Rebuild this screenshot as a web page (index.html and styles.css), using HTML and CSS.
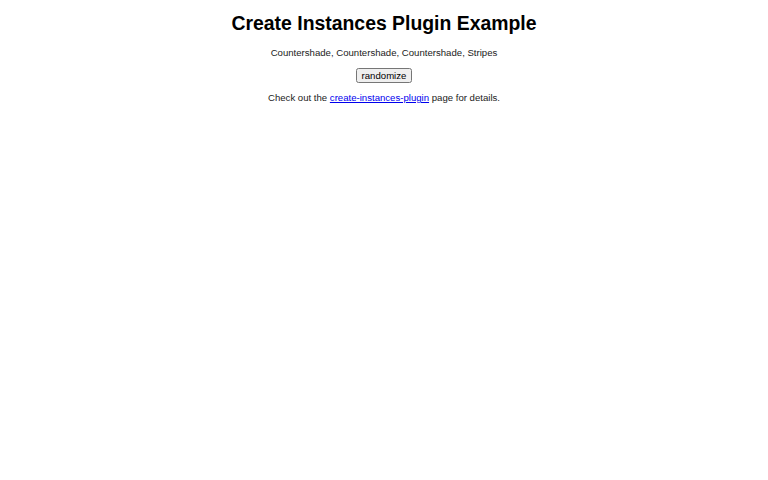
FILE: index.html
```html
<!DOCTYPE html>
<html lang="en">
<head>
  <meta charset="UTF-8">
  <title>Create Instances Plugin Example</title>
  <link rel="stylesheet" href="styles.css">
</head>
<body>
  <div class="page">
    <h1 class="title">Create Instances Plugin Example</h1>
    <div class="patterns">Countershade, Countershade, Countershade, Stripes</div>
    <button class="randomize">randomize</button>
    <p class="note">Check out the <a href="#">create-instances-plugin</a> page for details.</p>
  </div>
</body>
</html>
```

FILE: styles.css
```css
body {
  margin: 0;
  font-family: 'Liberation Sans', Arial, sans-serif;
  font-size: 9.6px;
  color: #222;
  background: #fff;
}

.page {
  display: flex;
  flex-direction: column;
  align-items: center;
  padding-top: 12px;
}

.title {
  margin: 0;
  font-size: 19.4px;
  font-weight: bold;
  color: #000;
}

.patterns {
  margin-top: 12px;
}

.randomize {
  margin-top: 10px;
  font-family: 'Liberation Sans', Arial, sans-serif;
  font-size: 9.6px;
  padding: 0 4px;
  color: #000;
}

.note {
  margin: 9px 0 0;
}

.note a {
  color: #00e;
}
```
